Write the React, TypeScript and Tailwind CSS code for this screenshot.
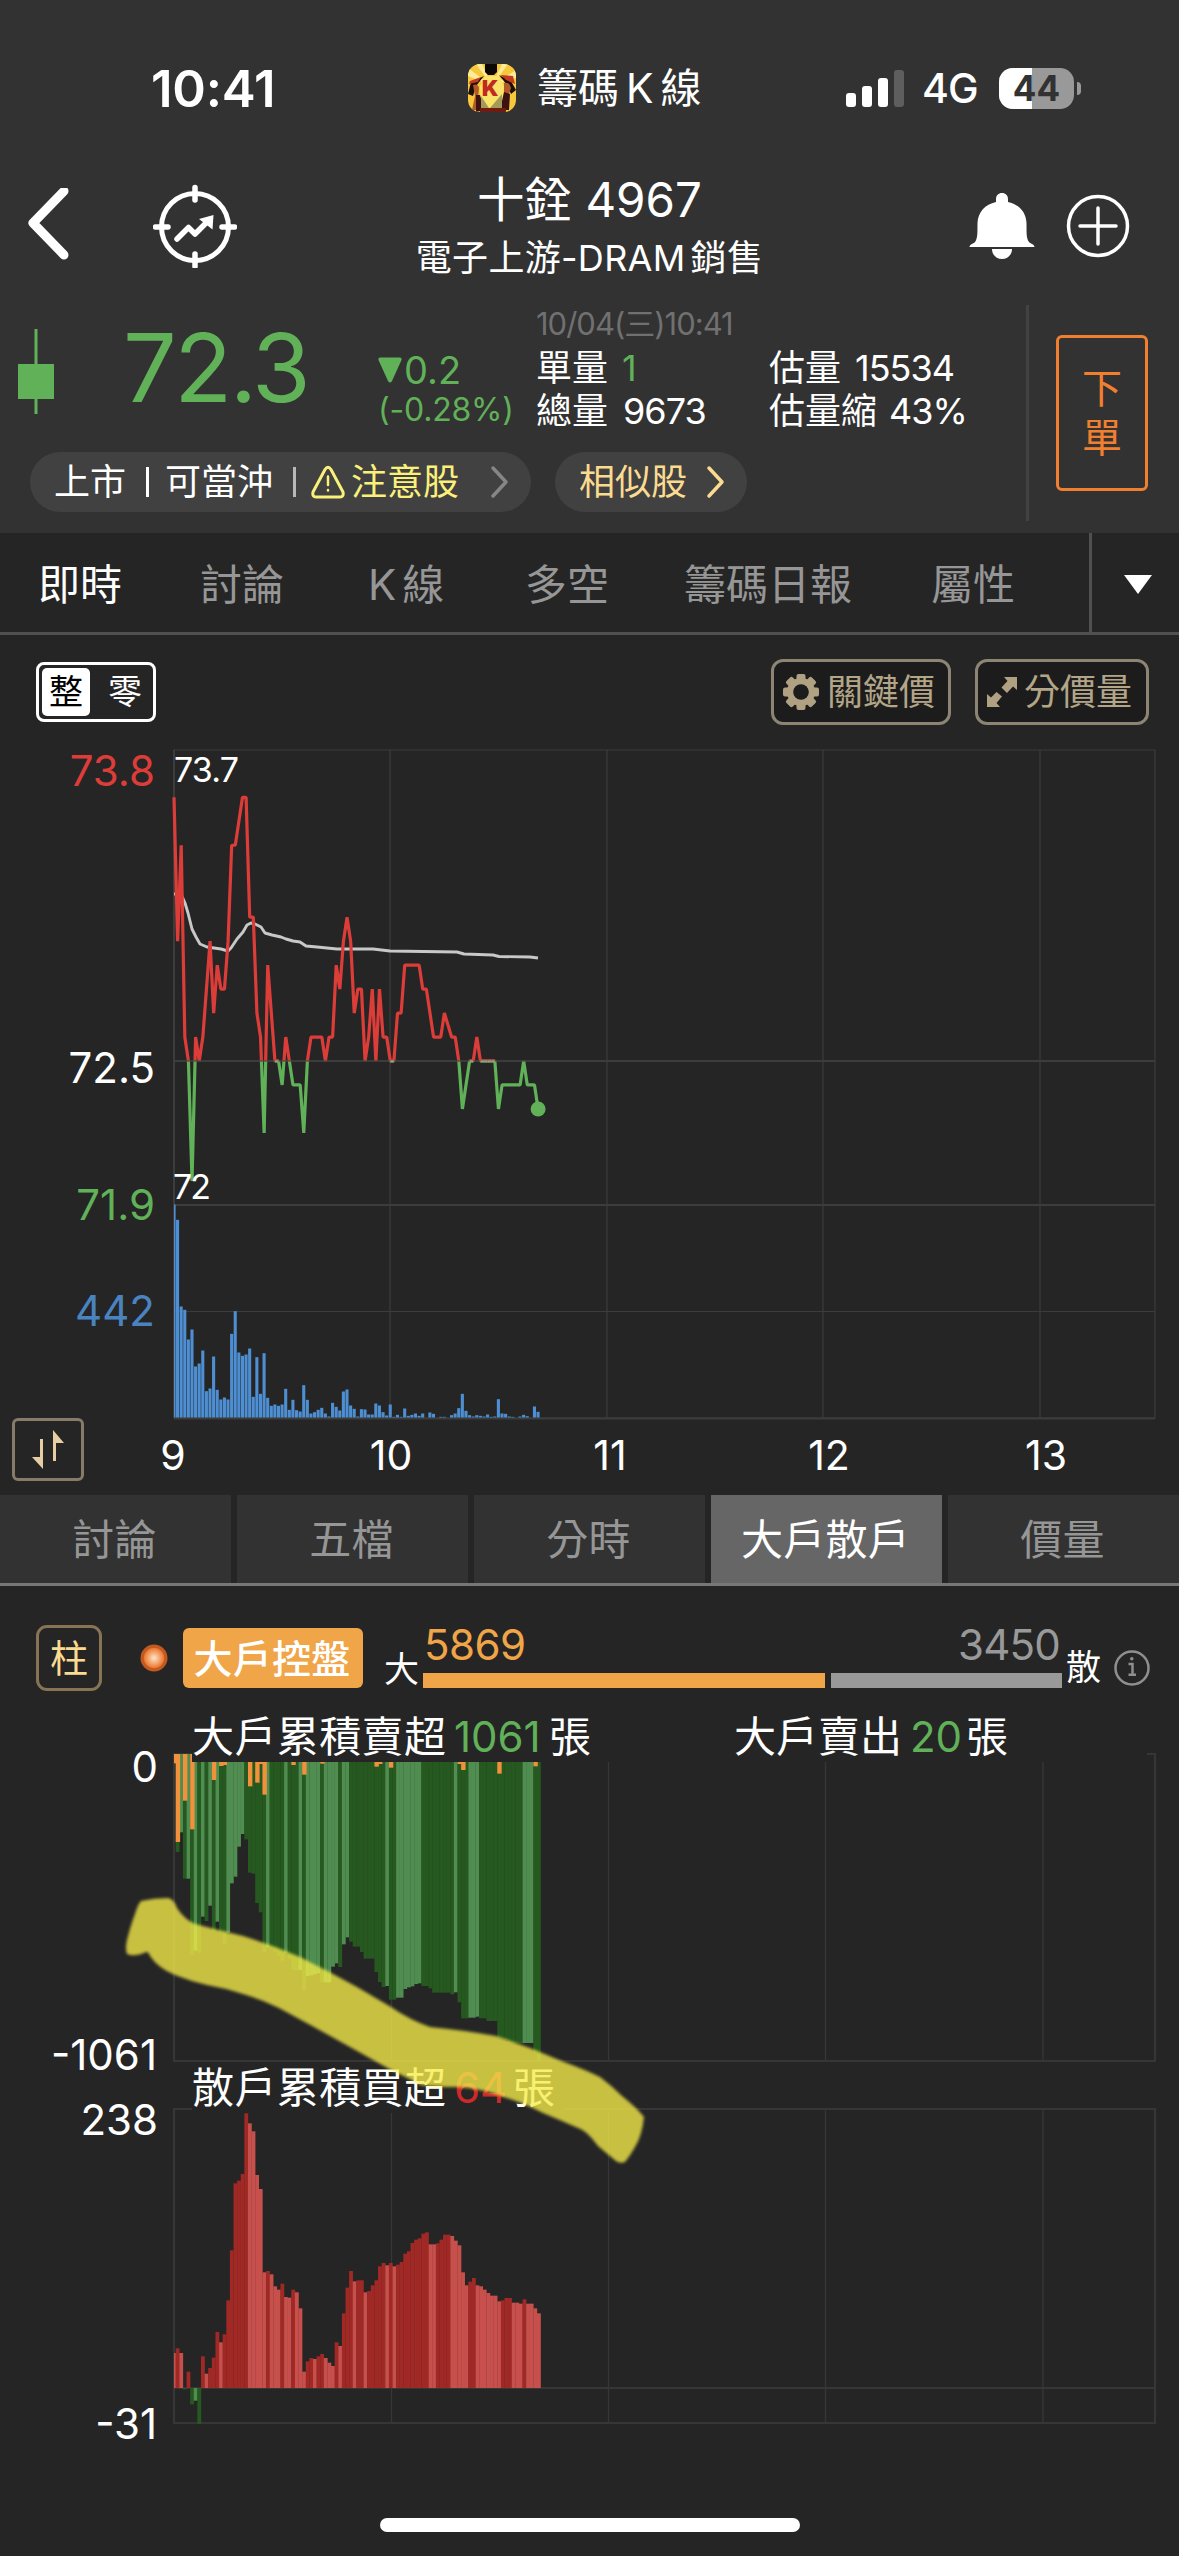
import type { ReactNode } from 'react'
import clsx from 'clsx'

const FONT = "font-['Inter','Noto_Sans_CJK_TC',sans-serif]"

const TABS = [
  { label: '即時', width: 'w-[162px]', active: true },
  { label: '討論', width: 'w-[168px]' },
  { label: 'K線', width: 'w-[157px]' },
  { label: '多空', width: 'w-[159px]' },
  { label: '籌碼日報', width: 'w-[247px]' },
  { label: '屬性', width: 'w-[158px]' },
]

const SUB_TABS = ['討論', '五檔', '分時', '大戶散戶', '價量']

// one entry per minute from 09:00, in ticks of 0.1 away from the reference price
const PRICES = [
  11, 5, 9, 1, 0, -5, 1, 0, 1, 3, 5, 2, 4, 3, 3, 5, 9, 9, 10, 11, 11, 6, 6, 2, 1, -3, 4, 2, 0, 0,
  -1, 1, 0, -1, -1, -1, -3, 0, 1, 1, 1, 1, 0, 1, 1, 4, 3, 5, 6, 5, 2, 3, 3, 0, 1, 3, 0, 3, 1, 1,
  0, 0, 2, 2, 4, 4, 4, 4, 4, 3, 3, 2, 1, 1, 1, 2, 1.5, 1, 1, 0, -2, -1, 0, 0, 1, 0, 0, 0, 0, 0,
  -2, -1, -1, -1, -1, -1, -1, 0, -1, -1, -1, -2,
]

const AVERAGE =
  '174,145 181,145 185,154 188,164 192,180 196,188 200,195 207,198 214,199 221,200 228,202 231,199 237,190 243,183 247,176 251,174 255,175 261,178 265,184 272,186 281,188 286,190 293,192 300,193 306,197 317,198 337,200 360,200 373,200 390,202 457,203 464,205 493,206 499,207.5 530,208 538,209'

const VOLUMES = [
  639, 593, 333, 323, 234, 264, 153, 162, 201, 79, 87, 183, 83, 54, 60, 54, 251, 319, 195, 185,
  189, 207, 62, 181, 71, 193, 59, 35, 39, 35, 39, 86, 23, 53, 22, 18, 97, 53, 12, 16, 23, 29, 12,
  3, 44, 32, 21, 78, 84, 36, 26, 3, 25, 24, 9, 9, 42, 36, 16, 6, 39, 2, 8, 2, 27, 5, 8, 12, 5, 12,
  0, 15, 11, 0, 2, 2, 0, 7, 12, 28, 71, 20, 7, 3, 7, 5, 3, 9, 2, 3, 55, 12, 11, 3, 2, 0, 3, 8, 4,
  0, 33, 17,
]

// accumulated net sell of the big holders
const BIG = [
  0, 294, 235, 374, 374, 603, 590, 596, 488, 501, 455, 533, 503, 538, 571, 536, 388, 368, 278, 240,
  256, 356, 359, 447, 475, 596, 580, 586, 593, 606, 620, 598, 613, 648, 648, 648, 710, 666, 664,
  661, 658, 685, 685, 685, 638, 628, 639, 571, 550, 563, 578, 578, 594, 614, 614, 614, 654, 684,
  699, 696, 737, 737, 731, 731, 705, 700, 697, 690, 688, 696, 696, 703, 716, 716, 716, 716, 716,
  721, 715, 745, 793, 793, 791, 791, 788, 793, 793, 801, 801, 801, 853, 855, 858, 868, 868, 868,
  868, 867, 867, 867, 898, 920,
]
const BIG_LIGHT = new Set([
  2, 4, 6, 8, 10, 12, 15, 16, 17, 18, 19, 26, 31, 35, 37, 38, 39, 40, 42, 43, 44, 45, 47, 48, 59,
  62, 63, 64, 65, 66, 67, 68, 78, 82, 83, 84, 97, 98, 99,
])
const BIG_BUYS: [number, number][] = [
  [0, 28], [1, 264], [3, 140], [5, 226], [11, 78], [13, 36], [14, 33], [21, 97], [23, 86], [24, 30],
  [25, 122], [33, 33], [36, 62], [41, 29], [56, 38], [57, 30], [60, 41], [79, 30], [80, 48],
  [90, 59], [100, 37],
]

// accumulated net buy of the retail side
const RETAIL = [
  105, 119, 105, -4, 49, -49, -38, -108, 95, 43, 60, 91, 168, 137, 161, 263, 413, 614, 622, 642,
  824, 794, 770, 639, 597, 347, 351, 341, 305, 295, 313, 273, 271, 295, 287, 239, 49, 80, 90, 87,
  95, 102, 90, 76, 66, 137, 126, 224, 301, 351, 320, 323, 323, 287, 291, 308, 323, 365, 375, 368,
  375, 365, 370, 378, 403, 410, 435, 445, 449, 463, 467, 431, 431, 434, 445, 460, 460, 456, 442,
  428, 347, 308, 319, 330, 308, 305, 295, 285, 277, 277, 260, 263, 270, 270, 256, 256, 253, 266,
  253, 253, 239, 224,
]
const RETAIL_LIGHT = new Set([
  0, 2, 6, 9, 13, 21, 22, 23, 24, 25, 27, 28, 29, 31, 32, 34, 35, 36, 39, 42, 43, 44, 46, 50, 53,
  59, 61, 71, 72, 77, 78, 79, 80, 81, 84, 85, 86, 87, 88, 89, 90, 94, 95, 96, 98, 99, 100, 101,
])

const LEFT = 174
const RIGHT = 1155

function StatusBar() {
  return (
    <div className="flex h-[162px] items-center pt-[14px] text-white">
      <span className="w-[318px] pl-[151px] text-[51px] font-semibold leading-none tracking-[-.2px]">10:41</span>
      <svg className="ml-[150px]" width="48" height="48" viewBox="0 0 48 48">
        <defs>
          <clipPath id="appIcon">
            <rect width="48" height="48" rx="12" />
          </clipPath>
        </defs>
        <g clipPath="url(#appIcon)">
          <rect width="48" height="48" fill="#f6c83a" />
          <path d="M24 22 0 4V12ZM24 22 8 0H14ZM24 22 34 0H40ZM24 22 48 6V14Z" fill="#fdeb9a" />
          <path d="M17 12 31 12 36 22 35 46 13 46 12 22Z" fill="#fbe268" />
          <path d="M17 0H29V8L26 11H20L17 8Z" fill="#0c0806" />
          <path d="M16 12 3 18 0 30 5 32 8 22ZM31 11 43 17 48 26 43 30 39 21Z" fill="#1e0d0a" />
          <path d="M33 11 45 12 47 20 38 16ZM13 13 2 17 1 20 10 18Z" fill="#c23a22" />
          <path d="M5 21Q10 19 11 24L9 46H4L7 32ZM36 19Q42 18 43 24L40 33 36 30Z" fill="#b05a2a" />
          <path d="M8 31 12 31 16 46 8 48ZM36 28 42 30 41 46 32 46Z" fill="#3c1212" />
          <path d="M13 32 21 44H13ZM34 30 22 44H34Z" fill="#a39a58" />
          <rect x="12" y="44" width="26" height="4" fill="#6e1b12" />
        </g>
        <text x="22" y="32" textAnchor="middle" fontSize="22" fontWeight="900" fill="#c02a20">
          K
        </text>
      </svg>
      <span className="ml-[21px] w-[309px] shrink-0 text-[41px] leading-none">
        籌碼<span className="px-[7px]">K</span>線
      </span>
      <svg className="shrink-0" width="58" height="38" viewBox="0 0 58 38">
        <rect x="0" y="24" width="10" height="14" rx="3" fill="#fff" />
        <rect x="16" y="17" width="10" height="21" rx="3" fill="#fff" />
        <rect x="32" y="9" width="10" height="29" rx="3" fill="#fff" />
        <rect x="48" y="1" width="10" height="37" rx="3" fill="#5e5e5e" />
      </svg>
      <span className="ml-[18px] w-[77px] shrink-0 text-[41px] font-medium leading-none tracking-[-1px]">4G</span>
      <div className="relative flex h-[41px] w-[75px] shrink-0 items-center justify-center overflow-hidden rounded-[14px] bg-[#999]">
        <div className="absolute inset-y-0 left-0 w-[33px] bg-white" />
        <span className="relative text-[35px] font-bold leading-none text-[#323232]">44</span>
      </div>
      <div className="ml-[3px] h-[13px] w-[4px] rounded-r-full bg-[#999]" />
    </div>
  )
}

function NavBar() {
  return (
    <div className="grid h-[128px] grid-cols-[1fr_auto_1fr] items-center text-white">
      <div className="flex items-center pl-[27px]">
        <svg width="44" height="76" viewBox="0 0 44 76" fill="none" stroke="#fff" strokeWidth="9" strokeLinecap="round" strokeLinejoin="round">
          <path d="M37 3 6 35 37 67" />
        </svg>
        <svg className="ml-[82px]" width="84" height="84" viewBox="0 0 84 84" fill="none" stroke="#fff">
          <circle cx="42" cy="43" r="33.5" strokeWidth="5" />
          <path d="M42 3.500V16M42 70V82.500M2.500 43H15M69 43H81.500" strokeWidth="5.500" strokeLinecap="round" />
          <path d="M24 55 35.500 43.500 42 50 53 39" strokeWidth="5.500" strokeLinecap="round" strokeLinejoin="round" />
          <path d="M46 35 60.500 31 59.500 45.500Z" fill="#fff" stroke="none" />
        </svg>
      </div>
      <div className="text-center">
        <div className="text-[47.5px] leading-[64px]">十銓 4967</div>
        <div className="text-[36px] leading-[52px] tracking-[.3px]">電子上游-DRAM<span className="pl-[5px]">銷售</span></div>
      </div>
      <div className="flex items-center justify-end pr-[49px]">
        <svg width="68" height="68" viewBox="0 0 68 68" fill="#fff">
          <path d="M34 1C37.500 1 40 3.500 40 7V10C51 12.500 58 20 58.500 31C58.700 40 58 46 61 50C63 52 66.500 52.500 66.500 55H1.500C1.500 52.500 5 52 7 50C10 46 9.300 40 9.500 31C10 20 17 12.500 28 10V7C28 3.500 30.500 1 34 1Z" />
          <path d="M24 57H44C44 63 39.500 67 34 67S24 63 24 57Z" />
        </svg>
        <svg className="ml-[30px]" width="64" height="64" viewBox="0 0 64 64" fill="none" stroke="#fff" strokeWidth="3.500">
          <circle cx="32" cy="32" r="29.500" />
          <path d="M32 14V50M14 32H50" strokeLinecap="round" />
        </svg>
      </div>
    </div>
  )
}

function Chevron({ color }: { color: string }) {
  return (
    <svg width="20" height="34" viewBox="0 0 20 34" fill="none" stroke={color} strokeWidth="3.500" strokeLinecap="round" strokeLinejoin="round">
      <path d="M3 3 16 17 3 31" />
    </svg>
  )
}

function Quote() {
  return (
    <div className="flex h-[243px] text-white">
      <div className="w-[1026px]">
        <div className="flex h-[162px] items-start">
          <svg className="ml-[18px] mt-[39px]" width="36" height="85" viewBox="0 0 36 85" fill="#60b158">
            <rect x="16.500" width="3" height="85" />
            <rect y="35" width="36" height="35" />
          </svg>
          <div className="ml-[69px] w-[255px] whitespace-nowrap pt-[28px] text-[95px] leading-[100px] tracking-[-2.500px] text-[#60b158]">72.3</div>
          <div className="w-[158px] whitespace-nowrap pt-[60px] text-[#60b158]">
            <div className="flex items-center text-[38px] leading-[40px]">
              <svg className="mr-[2px]" width="24" height="26" viewBox="0 0 24 26" fill="#60b158">
                <path d="M2 .5H22Q24 .5 23.500 3L14 24Q12 27 10 24L.5 3Q0 .5 2 .5Z" />
              </svg>
              0.2
            </div>
            <div className="text-[32px] leading-[40px] tracking-[-.2px]">(-0.28%)</div>
          </div>
          <div className="whitespace-nowrap pt-[12px] text-[36px] leading-[43px]">
            <div className="text-[31px] tracking-[-1px] text-[#707070]">10/04(三)10:41</div>
            <div className="grid grid-cols-[233px_1fr] pt-[2px]">
              <span>單量<span className="pl-[14px] text-[#60b158]">1</span></span>
              <span>估量<span className="pl-[14px] tracking-[-1px]">15534</span></span>
              <span>總量<span className="pl-[15px] tracking-[-1px]">9673</span></span>
              <span>估量縮<span className="pl-[12px] tracking-[-1px]">43%</span></span>
            </div>
          </div>
        </div>
        <div className="flex pl-[30px] text-[36px] leading-[60px]">
          <div className="flex h-[60px] w-[501px] items-center rounded-full bg-[#414141] pl-[24px]">
            <span>上市</span>
            <i className="ml-[20px] h-[30px] w-[3px] bg-white" />
            <span className="ml-[16px]">可當沖</span>
            <i className="ml-[20px] h-[30px] w-[3px] bg-[#b8b8b8]" />
            <svg className="ml-[15px]" width="34" height="34" viewBox="0 0 34 34" fill="none" stroke="#fbf07a" strokeWidth="3" strokeLinecap="round">
              <path d="M14 4.500Q17 0 20 4.500L32 27Q33 32 29 32H5Q1 32 2 27Z" />
              <path d="M17 11.500V20M17 25V25.500" strokeWidth="2.500" />
            </svg>
            <span className="ml-[6px] text-[#fbf07a]">注意股</span>
            <span className="ml-[31px]"><Chevron color="#868686" /></span>
          </div>
          <div className="ml-[24px] flex h-[60px] w-[192px] items-center rounded-full bg-[#414141] pl-[24px] text-[#fbdb90]">
            <span>相似股</span>
            <span className="ml-[19px]"><Chevron color="#fbdb90" /></span>
          </div>
        </div>
      </div>
      <div className="mb-[12px] mt-[15px] w-[153px] border-l-[3px] border-[#424242] pl-[27px] pt-[30px]">
        <div className="flex h-[156px] w-[92px] flex-col items-center rounded-[6px] border-[3px] border-[#f08030] pt-[26px] text-[40px] leading-[49px] text-[#f08030]">
          <span>下</span>
          <span>單</span>
        </div>
      </div>
    </div>
  )
}

function TabBar() {
  return (
    <div className="flex h-[102px] border-b-[3px] border-[#505050] pl-[38px] text-[42px]">
      {TABS.map(t => (
        <div key={t.label} className={clsx('flex shrink-0 items-center whitespace-nowrap pt-[3px]', t.width, t.active ? 'text-white' : 'text-[#969696]')}>
          {t.label === 'K線' ? <span>K<span className="pl-[6px]">線</span></span> : t.label}
        </div>
      ))}
      <div className="flex flex-1 items-center justify-center border-l-[3px] border-[#505050] pl-[4px] pt-[3px]">
        <svg width="28" height="19" viewBox="0 0 28 19" fill="#fff">
          <path d="M0 0H28L14 19Z" />
        </svg>
      </div>
    </div>
  )
}

function OutlineButton({ className, children }: { className: string; children: ReactNode }) {
  return (
    <div className={clsx('flex h-[66px] items-center whitespace-nowrap rounded-[12px] border-[3px] border-[#8c8573] bg-[#1c1c1c] text-[36px] leading-none text-[#b3a588]', className)}>
      {children}
    </div>
  )
}

function Toolbar() {
  return (
    <div className="flex h-[114px] items-center pl-[36px] pr-[30px]">
      <div className="flex h-[60px] w-[120px] items-center rounded-[8px] border-[3px] border-white pl-[3px] text-[34px] leading-none text-white">
        <span className="flex h-[48px] w-[48px] items-center justify-center rounded-[5px] bg-white text-black">整</span>
        <span className="ml-[18px]">零</span>
      </div>
      <OutlineButton className="ml-auto w-[180px] pl-[9px]">
        <svg className="mr-[8px]" width="36" height="36" viewBox="-18 -18 36 36" fill="#b0a182">
          {[0, 45, 90, 135].map(a => (
            <rect key={a} x="-4.500" y="-18" width="9" height="36" rx="2" transform={`rotate(${a})`} />
          ))}
          <circle r="14" />
          <circle r="7.800" fill="#1c1c1c" />
        </svg>
        關鍵價
      </OutlineButton>
      <OutlineButton className="ml-[24px] w-[174px] pl-[9px]">
        <svg className="mr-[7px]" width="30" height="30" viewBox="0 0 30 30" fill="#b0a182">
          <path d="M17 0H30V13L26 9.500 20 16 14.500 10.500 20.500 4ZM13 30H0V17L4 20.500 9.500 15 15 19.500 9.500 26Z" />
        </svg>
        分價量
      </OutlineButton>
    </div>
  )
}

function RealtimeChart() {
  const step = 3.605
  const zero = 312
  const tick = 23.97
  const x = (i: number) => LEFT + i * step
  const y = (v: number) => zero - v * tick
  const line = PRICES.map((v, i) => `${x(i)},${y(v)}`).join(' ')
  const last = PRICES.length - 1

  return (
    <div className="relative h-[746px]">
      <svg className="block" width="1179" height="746" viewBox="0 0 1179 746" fill="none">
        <defs>
          <clipPath id="above"><rect x="170" y="0" width="985" height="311.500" /></clipPath>
          <clipPath id="below"><rect x="170" y="312.500" width="985" height="200" /></clipPath>
        </defs>
        <g stroke="#3c3c3c">
          <path d="M174 1H1155V669H174ZM390 1V669M607 1V669M823 1V669M1040 1V669M174 562.500H1155" strokeWidth="1.200" />
          <path d="M174 312H1155M174 456H1155M174 669.500H1155M174 1V669" strokeWidth="2" />
        </g>
        {VOLUMES.map((v, i) => (
          <rect key={i} x={Math.max(LEFT, x(i) - 1.6)} y={668.500 - v / 3} width={i === 0 ? 1.6 : 3.1} height={v / 3} fill="#4d8fd2" />
        ))}
        <polyline points={AVERAGE} stroke="#c8c8c8" strokeWidth="2.900" strokeLinejoin="round" />
        {PRICES.map((v, i) =>
          v === 0 && PRICES[i + 1] === 0 ? (
            <path key={i} d={`M${x(i)} ${zero}H${x(i + 1)}`} stroke="#a0a0a0" strokeWidth="2.800" />
          ) : null,
        )}
        <polyline points={line} stroke="#dc3d38" strokeWidth="3.200" strokeLinejoin="bevel" clipPath="url(#above)" />
        <polyline points={line} stroke="#60b158" strokeWidth="3.200" strokeLinejoin="bevel" clipPath="url(#below)" />
        <circle cx={x(last)} cy={y(PRICES[last])} r="7.500" fill="#60b158" />
        <g fontSize="34" fill="#fff">
          <text x="174" y="33" textLength="65">73.7</text>
          <text x="173" y="450" textLength="38">72</text>
        </g>
        <g fontSize="42" textAnchor="end">
          <text x="155" y="37" fill="#dc3d38">73.8</text>
          <text x="155" y="334" fill="#fff">72.5</text>
          <text x="155" y="471" fill="#60b158">71.9</text>
          <text x="155" y="577" fill="#4a84c0">442</text>
        </g>
        <g fontSize="41" fill="#fff" textAnchor="middle">
          {[9, 10, 11, 12, 13].map((h, i) => (
            <text key={h} x={[173, 391, 610, 829, 1046][i]} y="721">{h}</text>
          ))}
        </g>
      </svg>
      <div className="absolute left-[12px] top-[669px] flex h-[63px] w-[72px] items-center justify-center rounded-[6px] border-[3px] border-[#857b68]">
        <svg width="34" height="40" viewBox="0 0 34 40" fill="#e6cda4">
          <path d="M9 9H12V39L1 27H9ZM22 31V0L33 13H25V31Z" />
        </svg>
      </div>
    </div>
  )
}

function SubTabs() {
  return (
    <div className="flex h-[91px] gap-[6px] border-b-[3px] border-[#777] text-[42px] leading-none">
      {SUB_TABS.map(t => (
        <div
          key={t}
          className={clsx(
            'flex flex-1 items-center justify-center pr-[2px] pt-[2px] tracking-[.3px]',
            t === '大戶散戶' ? 'bg-[#666] text-white' : 'bg-[#323232] text-[#969696]',
          )}
        >
          {t}
        </div>
      ))}
    </div>
  )
}

function Balance() {
  return (
    <div className="flex h-[114px] items-start pl-[36px] pt-[39px] leading-none text-white">
      <div className="flex h-[66px] w-[66px] items-center justify-center rounded-[11px] border-[3px] border-[#877454] text-[38px] text-[#fbdb90]">
        柱
      </div>
      <svg className="ml-[38px] mt-[19px]" width="28" height="28" viewBox="0 0 28 28">
        <defs>
          <radialGradient id="glow">
            <stop offset="0" stopColor="#fde6c8" />
            <stop offset=".72" stopColor="#ec7a33" />
            <stop offset=".78" stopColor="#c65a1e" />
            <stop offset="1" stopColor="#bd5a20" />
          </radialGradient>
        </defs>
        <circle cx="14" cy="14" r="13.500" fill="url(#glow)" />
      </svg>
      <div className="ml-[15px] mt-[3px] flex h-[60px] w-[180px] items-center justify-center rounded-[6px] bg-[#f0a548] pr-[2px] text-[39px] font-medium tracking-[.3px]">
        大戶控盤
      </div>
      <span className="ml-[21px] mt-[27px] w-[39px] text-[35px]">大</span>
      <div className="-mt-[1px] w-[639px] text-[42px]">
        <div className="flex justify-between pl-[1px] pr-[2px] leading-[42px]">
          <span className="text-[#f0a548] tracking-[-.5px]">5869</span>
          <span className="text-[#999] tracking-[-.8px]">3450</span>
        </div>
        <div className="mt-[7px] flex h-[15px] gap-[6px]">
          <div className="w-[402px] bg-[#f0a548]" />
          <div className="flex-1 bg-[#999]" />
        </div>
      </div>
      <span className="ml-[4px] mt-[25px] text-[35px]">散</span>
      <svg className="ml-[12px] mt-[24px]" width="38" height="38" viewBox="0 0 38 38" fill="none" stroke="#8f8f8f" strokeWidth="2.500">
        <circle cx="19" cy="19" r="16.500" />
        <path d="M15.500 15H19.500V25.500M15.500 25.800H23" />
        <circle cx="18.800" cy="9.800" r="1" fill="#8f8f8f" strokeWidth="1.500" />
      </svg>
    </div>
  )
}

function HolderChart() {
  const step = 3.613
  const barX = (i: number) => Math.max(LEFT, LEFT + i * step - 1.9)
  const barW = (i: number) => (i === 0 ? 1.9 : 3.8)

  return (
    <div className="relative h-[856px]">
      <svg className="block" width="1179" height="856" viewBox="0 0 1179 856" fill="none">
        <path d="M391.500 54V361M608.500 54V361M825.500 54V361M1043 54V361M391.500 409V723M608.500 409V723M825.500 409V723M1043 409V723" stroke="#373737" strokeWidth="1.300" />
        <path d={`M174 54H${RIGHT}V361H174ZM174 409H${RIGHT}V723H174ZM174 688H${RIGHT}`} stroke="#363636" strokeWidth="2.200" />
        {BIG.map((v, i) => (
          <rect key={i} x={barX(i)} y="54" width={barW(i)} height={v / 3} fill={BIG_LIGHT.has(i) ? '#508d50' : '#26591f'} />
        ))}
        {BIG_BUYS.map(([i, v]) => (
          <rect key={i} x={barX(i)} y="54" width={barW(i) + 0.6} height={v / 3} fill="#f0923c" />
        ))}
        {RETAIL.map((v, i) => {
          const light = RETAIL_LIGHT.has(i)
          const up = light ? '#c8504c' : '#a02925'
          const down = light ? '#508d50' : '#26591f'
          return (
            <rect key={i} x={barX(i)} y={v > 0 ? 688 - v / 3 : 688} width={barW(i)} height={Math.abs(v) / 3} fill={v > 0 ? up : down} />
          )
        })}
        <rect x="192" y="0" width="955" height="62" fill="#252525" />
        <rect x="192" y="364" width="372" height="49" fill="#252525" />
        <g fontSize="42" fill="#fff">
          <text y="52">
            <tspan x="192" letterSpacing=".4">大戶累積賣超</tspan>
            <tspan x="454">
              <tspan fill="#60b158">1061</tspan>
            </tspan>
            <tspan x="549">張</tspan>
            <tspan x="734">大戶賣出</tspan>
            <tspan x="910" fill="#60b158">20</tspan>
            <tspan x="966">張</tspan>
          </text>
          <text y="403">
            <tspan x="192" letterSpacing=".4">散戶累積買超</tspan>
            <tspan x="454" fill="#cc2a2a">64</tspan>
            <tspan x="513">張</tspan>
          </text>
        </g>
        <g fontSize="42" fill="#fff" textAnchor="end">
          <text x="158" y="82">0</text>
          <text x="157" y="370">-1061</text>
          <text x="158" y="435">238</text>
          <text x="157" y="739">-31</text>
        </g>
      </svg>
      <HighlighterStroke />
    </div>
  )
}

// hand drawn marker over the falling edge of the big holder chart
function HighlighterStroke() {
  return (
    <svg className="absolute left-[100px] top-[190px]" width="570" height="290" viewBox="0 0 570 290">
      <defs>
        <filter id="soft" x="-5%" y="-5%" width="110%" height="110%">
          <feGaussianBlur stdDeviation="1.800" />
        </filter>
      </defs>
      <g transform="translate(0 -150)" filter="url(#soft)" opacity=".78">
        <path
          d="M41 161Q54 158 68 158Q74 159 77 168Q84 179 95 184Q118 190 143 196Q172 205 200 217Q230 232 257 247L291 267Q310 280 330 287Q362 290 396 296Q430 307 464 322Q486 330 500 337Q512 346 522 356Q536 367 544 377Q542 396 535 407Q530 416 525 422Q520 424 516 421Q505 412 498 406Q486 390 478 388Q460 380 443 373Q424 363 404 357Q380 348 357 347Q336 347 321 345Q304 336 291 330L250 307L214 287L179 268Q160 259 143 254Q125 248 107 245Q90 241 75 235Q58 228 50 216Q48 210 44 213Q34 217 27 214Q25 208 27 200Q31 184 35 174Q38 164 41 161Z"
          fill="rgb(246,236,72)"
        />
      </g>
    </svg>
  )
}

export default function App() {
  return (
    <div className={clsx('relative flex h-[2556px] w-[1179px] flex-col overflow-hidden bg-[#252525]', FONT)}>
      <header className="bg-[#323232]">
        <StatusBar />
        <NavBar />
        <Quote />
      </header>
      <TabBar />
      <Toolbar />
      <RealtimeChart />
      <SubTabs />
      <Balance />
      <HolderChart />
      <div className="absolute left-[380px] top-[2518px] h-[14px] w-[420px] rounded-full bg-white" />
    </div>
  )
}
